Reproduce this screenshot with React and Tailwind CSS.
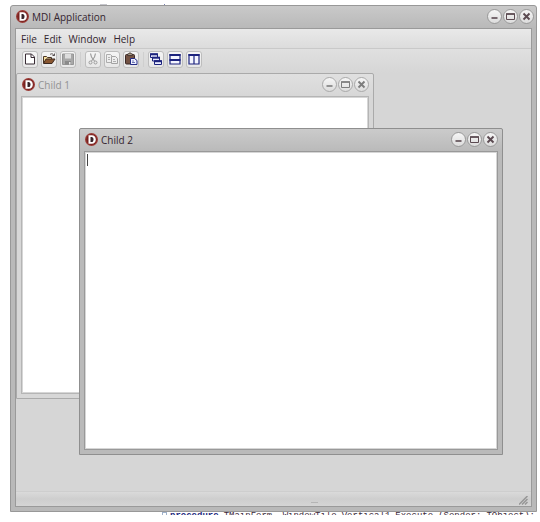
import React from "react";

function AppIcon() {
  return (
    <svg width="13" height="13" viewBox="0 0 13 13" className="shrink-0" aria-hidden="true">
      <circle cx="6.5" cy="6.5" r="6.5" fill="#9a3a35" />
      <circle cx="6.5" cy="6.5" r="5.2" fill="#76211f" />
      <path d="M3.500 2.200h3.300c2.600 0 4 1.700 4 4.300s-1.400 4.300-4 4.300H3.500z" fill="#fff" />
      <path d="M5.500 3.900h1.100c1.200 0 1.900 1 1.900 2.600S7.800 9.100 6.600 9.100H5.500z" fill="#38242a" />
    </svg>
  );
}

function CaptionButton({ label, active, children }) {
  return (
    <button
      type="button"
      aria-label={label}
      className={`flex size-[15px] items-center justify-center rounded-full border bg-linear-to-b from-[#f6f6f6] to-[#dcdcdc] ${
        active ? "border-[#999999] text-[#5b4a51]" : "border-[#a9a9a9] text-[#7d7d7d]"
      }`}
    >
      <svg width="9" height="9" viewBox="0 0 9 9" className="shrink-0" fill="none" stroke="currentColor">
        {children}
      </svg>
    </button>
  );
}

function TitleBar({ title, active, className }) {
  return (
    <header className={`flex h-[22px] items-center gap-[3px] pb-px ${className}`}>
      <AppIcon />
      <h1 className={`flex-1 text-[10px] leading-[14px] ${active ? "text-[#35252f]" : "text-[#929292]"}`}>{title}</h1>
      <div className="flex gap-px">
        <CaptionButton label="Minimize" active={active}>
          <path d="M1.500 6h6" strokeWidth="1.600" />
        </CaptionButton>
        <CaptionButton label="Maximize" active={active}>
          <path d="M.5 2h8v5.500h-8z" />
          <path d="M0 2h9" strokeWidth="1.600" />
        </CaptionButton>
        <CaptionButton label="Close" active={active}>
          <path d="M1.500 1.500l6 6M7.500 1.500l-6 6" strokeWidth="1.900" />
        </CaptionButton>
      </div>
    </header>
  );
}

function ChildWindow({ title, active, className }) {
  return (
    <section
      className={`absolute flex flex-col rounded-t-[2px] border pb-1 ${
        active
          ? "border-[#8f8f8f] bg-[#bdbdbd] bg-linear-to-b from-[#cbcbcb] to-[#bababa] to-[22px]"
          : "border-[#aaaaaa] bg-[#d9d9d9] bg-linear-to-b from-[#e0e0e0] to-[#d7d7d7] to-[22px]"
      } ${className}`}
    >
      <TitleBar title={title} active={active} className="pl-[5px] pr-[4px]" />
      <div className={`relative mx-1 flex flex-1 border ${active ? "border-[#999999]" : "border-[#b5b5b5]"}`}>
        <textarea
          aria-label={title}
          className="block flex-1 resize-none border border-[#d6d6d6] bg-white p-px text-[10px] leading-[14px] outline-none"
        />
        {active && <span className="absolute left-[2px] top-[2px] h-[12px] w-px bg-[#444444]" />}
      </div>
    </section>
  );
}

function ToolButton({ label, disabled, children }) {
  return (
    <button
      type="button"
      aria-label={label}
      disabled={disabled}
      className="flex h-[17px] w-4 items-center justify-center rounded-[3px] border border-[#bdbdbd] bg-linear-to-b from-[#f5f5f5] to-[#e7e7e7]"
    >
      <svg width="14" height="14" viewBox="0 0 14 14" className="shrink-0" fill="none">
        {children}
      </svg>
    </button>
  );
}

function Separator() {
  return <span className="mx-px h-[15px] w-px bg-[#cfcfcf]" />;
}

function Toolbar() {
  return (
    <div role="toolbar" className="flex h-6 items-center gap-[3px] bg-linear-to-b from-[#e0e0e0] to-[#d6d6d6] pb-1 pl-[6px]">
      <ToolButton label="New">
        <path d="M2.500 2h6l3 3v7h-9z" fill="#fff" stroke="#392c35" />
        <path d="M8 2v3.500h3.500" stroke="#392c35" />
      </ToolButton>
      <ToolButton label="Open">
        <path d="M1.500 11V4.500h3l1 1h4V7" fill="#f6dfa0" stroke="#4b3524" />
        <path d="M1.500 11.500L4 7h9l-3 4.500z" fill="#8a5731" stroke="#3c2a22" />
        <path d="M8 2.500c2-1.500 3.500-.5 4 1.500M10.500 3.500H12.500V1.500" stroke="#4a4142" strokeWidth=".9" />
      </ToolButton>
      <ToolButton label="Save" disabled>
        <path d="M1.500 2h11v10.500h-11z" fill="#a8a8a8" stroke="#959595" />
        <path d="M4 2h6v4.500H4z" fill="#dddddd" />
        <path d="M4 9h6v3.500H4z" fill="#8a8a8a" />
        <path d="M8 10h1.500v2.500H8z" fill="#e4e4e4" />
      </ToolButton>
      <Separator />
      <ToolButton label="Cut" disabled>
        <path d="M4.500 1.500l1 3.500 3 4M9.500 1.500L8.500 5l-3 4" stroke="#9b9b9b" strokeWidth="1.100" />
        <circle cx="4.500" cy="10.500" r="1.500" stroke="#9b9b9b" />
        <circle cx="9.500" cy="10.500" r="1.500" stroke="#9b9b9b" />
      </ToolButton>
      <ToolButton label="Copy" disabled>
        <path d="M1.500 2.500h4l2 2v6h-6z" fill="#eee" stroke="#adadad" />
        <path d="M6.500 4.500h4l2 2v5h-6z" fill="#eee" stroke="#a3a3a3" />
        <path d="M3 5.500h2M3 7.500h2M8 7.500h2M8 9.500h3" stroke="#b0b0b0" />
      </ToolButton>
      <ToolButton label="Paste">
        <rect x="1.500" y="2.500" width="9" height="9.500" rx="1" fill="#735243" stroke="#3a2927" />
        <path d="M3.500 3.500h5V2h-1L7 1H5l-.5 1h-1z" fill="#aa9a86" stroke="#3a2d2b" strokeWidth=".8" />
        <path d="M6.500 6.500h4l2.500 2v4H6.500z" fill="#eef0ff" stroke="#242c86" />
        <path d="M8 9h2M8 10.500h3" stroke="#4e5aa3" strokeWidth=".8" />
      </ToolButton>
      <Separator />
      <ToolButton label="Cascade">
        <path d="M1.500 2h7v3.500h-7z" fill="#e9ebff" stroke="#1c237e" />
        <path d="M1 2.300h8" stroke="#1c237e" strokeWidth="2" />
        <path d="M3.500 5.500h7V9h-7z" fill="#e9ebff" stroke="#1c237e" />
        <path d="M3 5.700h8" stroke="#1c237e" strokeWidth="2" />
        <path d="M5.500 9h7v3.500h-7z" fill="#e9ebff" stroke="#1c237e" />
        <path d="M5 9.200h8" stroke="#1c237e" strokeWidth="2" />
      </ToolButton>
      <ToolButton label="Tile Horizontally">
        <path d="M2 2.500h10v9.500H2z" fill="#f4f5ff" stroke="#1c237e" strokeWidth="1.200" />
        <path d="M1.500 3h11M1.500 8h11" stroke="#1c237e" strokeWidth="2" />
      </ToolButton>
      <ToolButton label="Tile Vertically">
        <path d="M2 2.500h10V12H2zM7 3v9" fill="#f4f5ff" stroke="#1c237e" strokeWidth="1.200" />
        <path d="M1.500 3h11" stroke="#1c237e" strokeWidth="2" />
      </ToolButton>
    </div>
  );
}

function MenuBar() {
  return (
    <nav className="flex h-5 items-center gap-[7px] border-b border-[#c9c9c9] bg-linear-to-b from-[#e9e9e9] to-[#dcdcdc] pl-[5px] text-[10px] leading-[14px] text-[#33262e]">
      {["File", "Edit", "Window", "Help"].map((item) => (
        <button key={item} type="button">
          {item}
        </button>
      ))}
    </nav>
  );
}

function StatusBar() {
  return (
    <footer className="flex h-[15px] items-end justify-between border-t border-[#cecece] bg-linear-to-b from-[#dadada] via-[#cecece] to-[#d5d5d5] pr-[3px]">
      <span className="flex w-[59%] justify-end pb-[3px]">
        <span className="h-px w-[7px] bg-[#b5b5b5]" />
      </span>
      <svg width="9" height="9" viewBox="0 0 9 9" stroke="#969696" strokeWidth="1.500" className="mb-px" aria-hidden="true">
        <path d="M0 8.500L8.500 0M3 8.500L8.500 3M6 8.500L8.500 6" />
      </svg>
    </footer>
  );
}

function EditorLine() {
  return (
    <div className="flex h-[3px] items-start overflow-hidden pl-[152px] pr-[2px] font-['Liberation_Mono',monospace] text-[9px] leading-[9px] text-[#3d2b3b]">
      <span className="mr-[3px] h-2 w-[5px] border border-[#9fb1ca]" />
      <code className="flex flex-1 justify-between font-[inherit]">
        <b className="text-[#1e2a80]">procedure</b>
        <span>TMainForm.</span>
        <span>WindowTile</span>
        <span>Vertical1</span>
        <span>Execute</span>
        <span>(Sender:</span>
        <span>TObject);</span>
      </code>
    </div>
  );
}

export default function App() {
  return (
    <main className="bg-white pl-[10px] pr-[3px] font-['Open_Sans','Noto_Sans',sans-serif]">
      <div className="flex h-[5px] items-end pl-[90px]">
        <span className="h-px w-[7px] bg-[#c6c6cc]" />
        <span className="ml-[57px] h-px w-px bg-[#7e84b0]" />
      </div>
      <div className="flex flex-col rounded-t-[3px] border border-[#989898] bg-[#bebebe] bg-linear-to-b from-[#c9c9c9] to-[#b9b9b9] to-[22px] pb-1">
        <TitleBar title="MDI Application" active className="pl-[5px] pr-[2px]" />
        <div className="mx-1 flex flex-col border border-[#9a9a9a]">
          <MenuBar />
          <Toolbar />
          <div className="relative min-h-[418px] overflow-hidden bg-[#d6d6d6]">
            <ChildWindow title="Child 1" className="left-0 top-0 h-[326px] w-[358px]" />
            <ChildWindow title="Child 2" active className="left-[63px] top-[55px] h-[327px] w-[424px]" />
          </div>
          <StatusBar />
        </div>
      </div>
      <EditorLine />
    </main>
  );
}
